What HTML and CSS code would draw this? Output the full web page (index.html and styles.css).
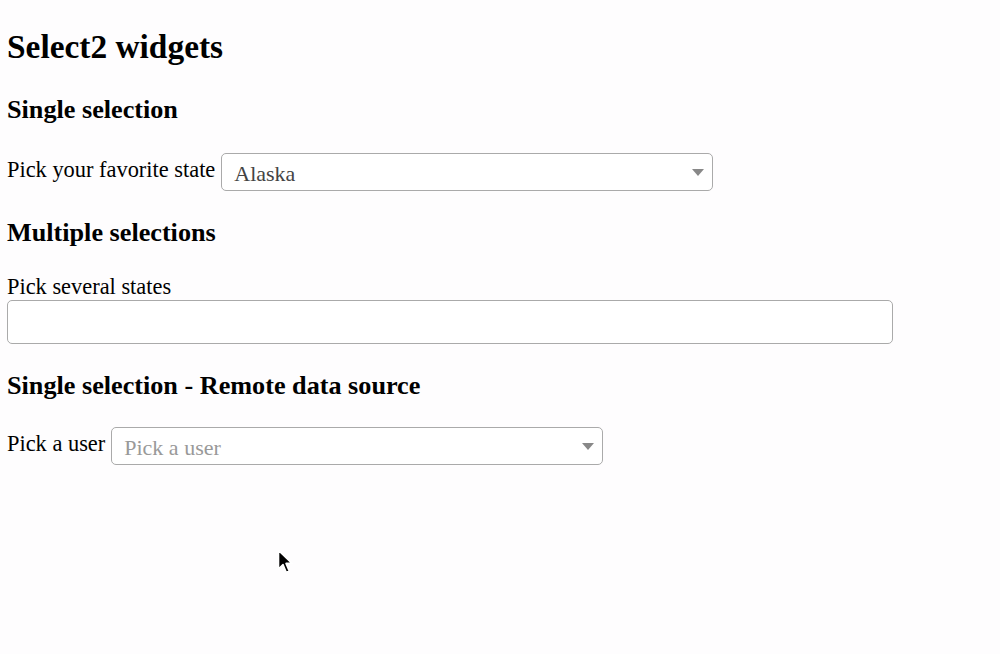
FILE: index.html
```html
<!DOCTYPE html>
<html lang="en">
<head>
<meta charset="utf-8">
<title>Select2 widgets</title>
<link rel="stylesheet" href="styles.css">
</head>
<body>
<main class="page">
  <h1 class="title">Select2 widgets</h1>

  <h2 class="section-title first">Single selection</h2>
  <div class="field-row">
    <label class="field-label">Pick your favorite state</label>
    <span class="select single">
      <span class="select-value">Alaska</span>
      <span class="select-arrow"></span>
    </span>
  </div>

  <h2 class="section-title">Multiple selections</h2>
  <label class="field-label block">Pick several states</label>
  <span class="select multiple"></span>

  <h2 class="section-title">Single selection - Remote data source</h2>
  <div class="field-row last">
    <label class="field-label">Pick a user</label>
    <span class="select single">
      <span class="select-value placeholder">Pick a user</span>
      <span class="select-arrow"></span>
    </span>
  </div>

  <svg class="cursor" width="16" height="26" viewBox="0 0 16 26" aria-hidden="true">
    <path d="M1.5 1.5 L1.5 20 L6 15.5 L9.2 23.2 L12.2 21.9 L9 14.4 L15 14.4 Z" fill="#000" stroke="#fff" stroke-width="1.6" stroke-linejoin="round"/>
  </svg>
</main>
</body>
</html>
```

FILE: styles.css
```css
html, body {
  margin: 0;
  padding: 0;
  background: #fefdfe;
}

body {
  font-family: "Liberation Serif", "Times New Roman", serif;
  color: #000;
}

.page {
  position: relative;
  padding: 27px 7px 0 7px;
  min-height: 627px;
}

.title {
  margin: 0;
  font-size: 33.4px;
  line-height: 40px;
  font-weight: bold;
}

.section-title {
  margin: 27px 0 0 0;
  font-size: 26.2px;
  line-height: 30px;
  font-weight: bold;
}

.section-title.first {
  margin-top: 28px;
}

.field-row {
  display: flex;
  align-items: center;
  gap: 6px;
  margin-top: 28px;
}

.field-row.last {
  margin-top: 26px;
}

.field-label {
  font-size: 22.4px;
  line-height: 26px;
  padding-bottom: 4px;
  white-space: nowrap;
}

.field-label.block {
  display: block;
  margin-top: 26px;
  padding-bottom: 0;
}

.select {
  position: relative;
  display: flex;
  align-items: center;
  box-sizing: border-box;
  border: 1px solid #aaa;
  border-radius: 5px;
  background: #fff;
}

.select.single {
  width: 492px;
  height: 38px;
  padding: 0 30px 0 12px;
}

.select.multiple {
  width: 886px;
  height: 44px;
}

.select-value {
  font-size: 22px;
  line-height: 26px;
  color: #444;
  padding-top: 3px;
}

.select-value.placeholder {
  color: #999;
}

.select-arrow {
  position: absolute;
  right: 8px;
  top: 15px;
  width: 0;
  height: 0;
  border-left: 6px solid transparent;
  border-right: 6px solid transparent;
  border-top: 7px solid #888;
}

.cursor {
  position: absolute;
  left: 277px;
  top: 549px;
}
```
